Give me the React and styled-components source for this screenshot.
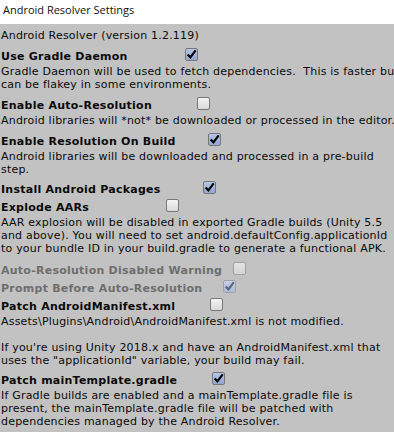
import React from "react";
import styled, { createGlobalStyle } from "styled-components";

const GlobalStyle = createGlobalStyle`
  html, body {
    margin: 0;
    padding: 0;
    background: #c2c2c2;
  }
  body {
    width: 394px;
    height: 432px;
    overflow: hidden;
  }
`;

const Window = styled.div`
  width: 394px;
  height: 432px;
  overflow: hidden;
  background: #c2c2c2;
  display: flex;
  flex-direction: column;
`;

const TitleBar = styled.div`
  flex: none;
  height: 24px;
  background: #ffffff;
  display: flex;
  align-items: center;
  padding-left: 3px;
  padding-bottom: 5px;
  box-sizing: border-box;
  font-family: "Open Sans", "Noto Sans", sans-serif;
  font-size: 11px;
  color: #111111;
`;

const Body = styled.div`
  flex: none;
  display: flex;
  flex-direction: column;
  padding: 5px 0 0 1px;
  font-family: "DejaVu Sans", Verdana, sans-serif;
  font-size: 11px;
  letter-spacing: 0.2px;
  color: #0a0a0a;
`;

const Line = styled.div`
  height: 13px;
  line-height: 13px;
  white-space: pre;
`;

const Version = styled(Line)`
  margin-bottom: 5px;
`;

const Section = styled.div`
  flex: none;
  display: flex;
  flex-direction: column;
  margin-bottom: ${(p) => p.gap ?? 5}px;
`;

const Row = styled.div`
  display: flex;
  height: 18px;
`;

const Label = styled.div`
  width: ${(p) => p.width}px;
  flex: none;
  font-weight: bold;
  font-size: 11px;
  letter-spacing: 0.25px;
  padding-top: 3px;
  line-height: 14px;
  white-space: pre;
  color: ${(p) => (p.disabled ? "#6e6e6e" : "#0a0a0a")};
`;

const Box = styled.div`
  width: 13px;
  height: 13px;
  margin-top: 1px;
  box-sizing: border-box;
  border-radius: 2px;
  border: 1px solid ${(p) => (p.disabled ? "#a2a2a2" : "#777777")};
  background: ${(p) =>
    p.checked
      ? p.disabled
        ? "linear-gradient(#c4cfe4, #aebbd6)"
        : "linear-gradient(#b7c6e6, #92a6d2)"
      : p.disabled
      ? "linear-gradient(#e4e4e4, #d4d4d4)"
      : "linear-gradient(#f4f4f4, #d8d8d8)"};
  display: flex;
  align-items: center;
  justify-content: center;
`;

const Check = ({ disabled }) => (
  <svg width="11" height="11" viewBox="0 0 10 10">
    <path
      d="M1.5 5 L4 7.6 L8.8 1.2"
      fill="none"
      stroke={disabled ? "#5c6478" : "#000"}
      strokeWidth="2"
    />
  </svg>
);

const Toggle = ({ checked, disabled }) => (
  <Box checked={checked} disabled={disabled}>
    {checked && <Check disabled={disabled} />}
  </Box>
);

const sections = [
  {
    label: "Use Gradle Daemon",
    x: 185,
    checked: true,
    lines: [
      "Gradle Daemon will be used to fetch dependencies.  This is faster but",
      "can be flakey in some environments.",
    ],
  },
  {
    label: "Enable Auto-Resolution",
    x: 197,
    lines: ["Android libraries will *not* be downloaded or processed in the editor."],
  },
  {
    label: "Enable Resolution On Build",
    x: 208,
    checked: true,
    gap: 4,
    lines: [
      "Android libraries will be downloaded and processed in a pre-build",
      "step.",
    ],
  },
  { label: "Install Android Packages", x: 203, checked: true, gap: 0, lines: [] },
  {
    label: "Explode AARs",
    x: 166,
    gap: 6,
    lines: [
      "AAR explosion will be disabled in exported Gradle builds (Unity 5.5",
      "and above). You will need to set android.defaultConfig.applicationId",
      "to your bundle ID in your build.gradle to generate a functional APK.",
    ],
  },
  {
    label: "Auto-Resolution Disabled Warning",
    x: 233,
    disabled: true,
    gap: 0,
    lines: [],
  },
  {
    label: "Prompt Before Auto-Resolution",
    x: 223,
    disabled: true,
    checked: true,
    gap: 0,
    lines: [],
  },
  {
    label: "Patch AndroidManifest.xml",
    x: 210,
    gap: 4,
    lines: [
      "Assets\\Plugins\\Android\\AndroidManifest.xml is not modified.",
      "",
      "If you're using Unity 2018.x and have an AndroidManifest.xml that",
      'uses the "applicationId" variable, your build may fail.',
    ],
  },
  {
    label: "Patch mainTemplate.gradle",
    x: 212,
    checked: true,
    lines: [
      "If Gradle builds are enabled and a mainTemplate.gradle file is",
      "present, the mainTemplate.gradle file will be patched with",
      "dependencies managed by the Android Resolver.",
    ],
  },
];

export default function App() {
  return (
    <Window>
      <GlobalStyle />
      <TitleBar>Android Resolver Settings</TitleBar>
      <Body>
        <Version>Android Resolver (version 1.2.119)</Version>
        {sections.map((s) => (
          <Section key={s.label} gap={s.gap}>
            <Row>
              <Label width={s.x - 1} disabled={s.disabled}>
                {s.label}
              </Label>
              <Toggle checked={s.checked} disabled={s.disabled} />
            </Row>
            {s.lines.map((l, i) => (
              <Line key={i}>{l}</Line>
            ))}
          </Section>
        ))}
      </Body>
    </Window>
  );
}
